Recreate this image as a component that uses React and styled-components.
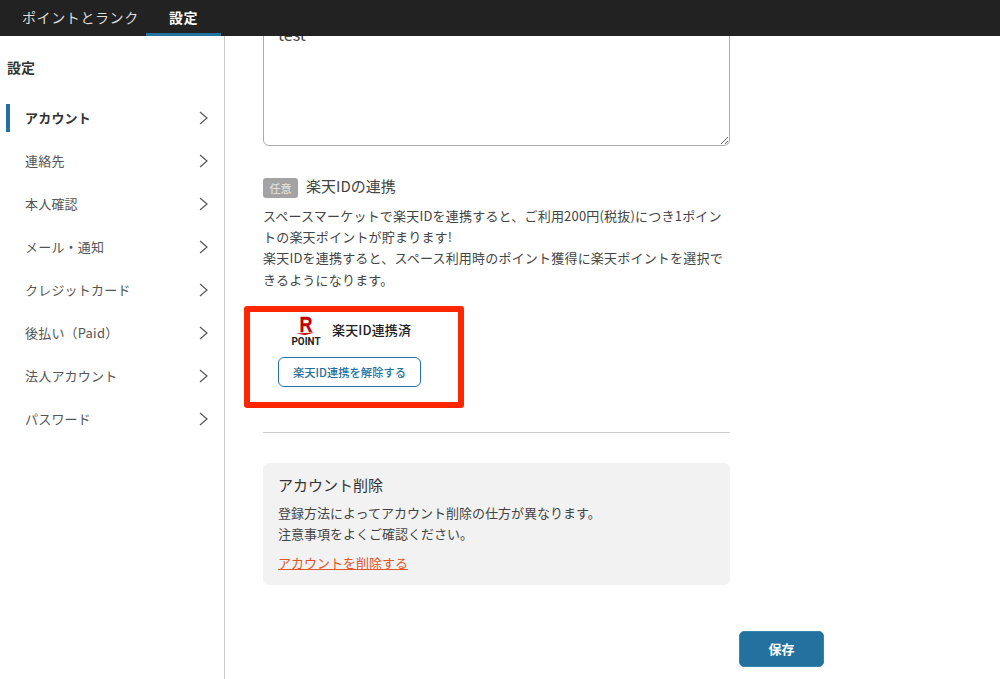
import styled, { createGlobalStyle } from 'styled-components';

const GlobalStyle = createGlobalStyle`
  html, body {
    margin: 0;
    padding: 0;
    height: 679px;
    overflow: hidden;
    background: #fff;
    font-family: "Noto Sans CJK JP", "Liberation Sans", sans-serif;
    color: #333;
  }
  * { box-sizing: border-box; }
`;

const navItems = ['アカウント', '連絡先', '本人確認', 'メール・通知', 'クレジットカード', '後払い（Paid）', '法人アカウント', 'パスワード'];

const Chevron = () => (
  <ChevronIcon viewBox="0 0 9 14" width="9" height="14">
    <polyline points="1,1 8,7 1,13" fill="none" stroke="#555" strokeWidth="1.2" />
  </ChevronIcon>
);

const RakutenPointLogo = () => (
  <Logo>
    <svg viewBox="0 0 36 36" width="36" height="36">
      <text x="18" y="20" textAnchor="middle" fontFamily="Liberation Sans" fontWeight="700" fontSize="22" fill="#bf0000" stroke="#bf0000" strokeWidth="0.3" textLength="13" lengthAdjust="spacingAndGlyphs">R</text>
      <polygon points="8,21.5 27,20.5 17,23" fill="#bf0000" />
      <text x="18" y="33" textAnchor="middle" fontFamily="Roboto" fontWeight="700" fontSize="11" fill="#222" textLength="29" lengthAdjust="spacingAndGlyphs">POINT</text>
    </svg>
  </Logo>
);

const App = () => {
  return (
    <Page>
      <GlobalStyle />
      <Header>
        <Tab>ポイントとランク</Tab>
        <Tab $active>設定</Tab>
      </Header>
      <Body>
        <Sidebar>
          <SideTitle>設定</SideTitle>
          {navItems.map((item, i) => (
            <NavItem key={item}>
              <NavMark $active={i === 0} />
              <NavLabel $active={i === 0}>{item}</NavLabel>
              <Chevron />
            </NavItem>
          ))}
        </Sidebar>
        <Main>
          <Column>
            <Textarea defaultValue="test" readOnly />
            <SectionHead>
              <Badge>任意</Badge>
              <SectionTitle>楽天IDの連携</SectionTitle>
            </SectionHead>
            <Description>
              スペースマーケットで楽天IDを連携すると、ご利用200円(税抜)につき1ポイントの楽天ポイントが貯まります!
              <br />
              楽天IDを連携すると、スペース利用時のポイント獲得に楽天ポイントを選択できるようになります。
            </Description>
            <HighlightBox>
              <LinkedRow>
                <RakutenPointLogo />
                <LinkedText>楽天ID連携済</LinkedText>
              </LinkedRow>
              <OutlineButton>楽天ID連携を解除する</OutlineButton>
            </HighlightBox>
            <Divider />
            <DeleteCard>
              <DeleteTitle>アカウント削除</DeleteTitle>
              <DeleteText>
                登録方法によってアカウント削除の仕方が異なります。
                <br />
                注意事項をよくご確認ください。
              </DeleteText>
              <DeleteLink href="#">アカウントを削除する</DeleteLink>
            </DeleteCard>
          </Column>
          <SaveRow>
            <SaveButton>保存</SaveButton>
          </SaveRow>
        </Main>
      </Body>
    </Page>
  );
};

export default App;

const Page = styled.div`
  height: 679px;
  overflow: hidden;
  display: flex;
  flex-direction: column;
`;

const Header = styled.header`
  position: relative;
  z-index: 2;
  flex: none;
  height: 36px;
  background: #222;
  display: flex;
  padding-left: 22px;
`;

const Tab = styled.div`
  height: 36px;
  width: ${(p) => (p.$active ? '75px' : '124px')};
  display: flex;
  align-items: center;
  justify-content: ${(p) => (p.$active ? 'center' : 'flex-start')};
  font-size: 14px;
  letter-spacing: 0.6px;
  white-space: nowrap;
  font-weight: ${(p) => (p.$active ? 700 : 400)};
  color: ${(p) => (p.$active ? '#fff' : '#ddd')};
  border-bottom: 3px solid ${(p) => (p.$active ? '#23719f' : 'transparent')};
`;

const Body = styled.div`
  flex: 1;
  display: flex;
  min-height: 0;
`;

const Sidebar = styled.nav`
  flex: none;
  width: 225px;
  border-right: 1px solid #ccc;
  padding-top: 21px;
`;

const SideTitle = styled.h2`
  margin: 0 0 18px 7px;
  font-size: 14px;
  line-height: 21px;
  font-weight: 700;
  color: #333;
`;

const NavItem = styled.div`
  height: 43px;
  display: flex;
  align-items: center;
  padding-left: 6px;
  padding-right: 16px;
`;

const NavMark = styled.span`
  flex: none;
  width: 4px;
  height: 28px;
  background: ${(p) => (p.$active ? '#23719f' : 'transparent')};
`;

const NavLabel = styled.span`
  margin-left: 15px;
  font-size: 13px;
  letter-spacing: 0.2px;
  font-weight: ${(p) => (p.$active ? 700 : 400)};
  color: ${(p) => (p.$active ? '#333' : '#555')};
`;

const ChevronIcon = styled.svg`
  margin-left: auto;
`;

const Main = styled.main`
  flex: 1;
  padding-left: 38px;
  min-width: 0;
`;

const Column = styled.div`
  width: 467px;
`;

const Textarea = styled.textarea`
  display: block;
  width: 467px;
  height: 140px;
  margin-top: -30px;
  padding: 17px 14px;
  border: 1px solid #aaa;
  border-radius: 6px;
  font-family: inherit;
  font-size: 16px;
  line-height: 20px;
  color: #444;
  outline: none;
`;

const SectionHead = styled.div`
  display: flex;
  align-items: center;
  gap: 8px;
  margin-top: 32px;
  height: 20px;
`;

const Badge = styled.span`
  width: 35px;
  height: 20px;
  border-radius: 3px;
  background: #a3a3a3;
  color: #e6e6e6;
  font-size: 11px;
  display: flex;
  align-items: center;
  justify-content: center;
`;

const SectionTitle = styled.span`
  margin-top: -4px;
  font-size: 15px;
  line-height: 20px;
  color: #444;
`;

const Description = styled.p`
  margin: 7px 0 0;
  font-size: 13px;
  line-height: 21.2px;
  letter-spacing: 0.2px;
  color: #444;
`;

const HighlightBox = styled.div`
  width: 220px;
  height: 102px;
  margin: 16px 0 0 -19px;
  border: 6px solid #ff2600;
  border-radius: 3px;
  padding: 0 0 0 28px;
`;

const LinkedRow = styled.div`
  display: flex;
  align-items: center;
  padding-left: 10px;
  height: 36px;
`;

const Logo = styled.div`
  flex: none;
  width: 36px;
  height: 36px;
  svg { display: block; }
`;

const LinkedText = styled.span`
  margin-left: 8px;
  font-size: 13px;
  letter-spacing: 0.15px;
  font-weight: 500;
  color: #222;
`;

const OutlineButton = styled.button`
  display: block;
  width: 143px;
  height: 30px;
  margin-top: 9px;
  padding: 0;
  background: #fff;
  border: 1px solid #23719f;
  border-radius: 6px;
  color: #23719f;
  font-family: inherit;
  font-size: 11.3px;
  font-weight: 500;
`;

const Divider = styled.hr`
  margin: 24px 0 0;
  border: 0;
  border-top: 1px solid #ccc;
`;

const DeleteCard = styled.section`
  margin-top: 30px;
  height: 122px;
  padding: 11px 15px;
  background: #f2f2f2;
  border-radius: 6px;
`;

const DeleteTitle = styled.h3`
  margin: 0;
  font-size: 15px;
  line-height: 22px;
  font-weight: 400;
  color: #333;
`;

const DeleteText = styled.p`
  margin: 6px 0 0;
  font-size: 13px;
  line-height: 21px;
  color: #444;
`;

const DeleteLink = styled.a`
  display: inline-block;
  margin-top: 8px;
  font-size: 13px;
  line-height: 21px;
  color: #e0562b;
`;

const SaveRow = styled.div`
  margin-top: 46px;
  padding-left: 476px;
`;

const SaveButton = styled.button`
  display: block;
  width: 85px;
  height: 36px;
  background: #23719f;
  border: 1px solid #3d82aa;
  border-radius: 5px;
  color: #fff;
  font-family: inherit;
  font-size: 13px;
  font-weight: 700;
`;
